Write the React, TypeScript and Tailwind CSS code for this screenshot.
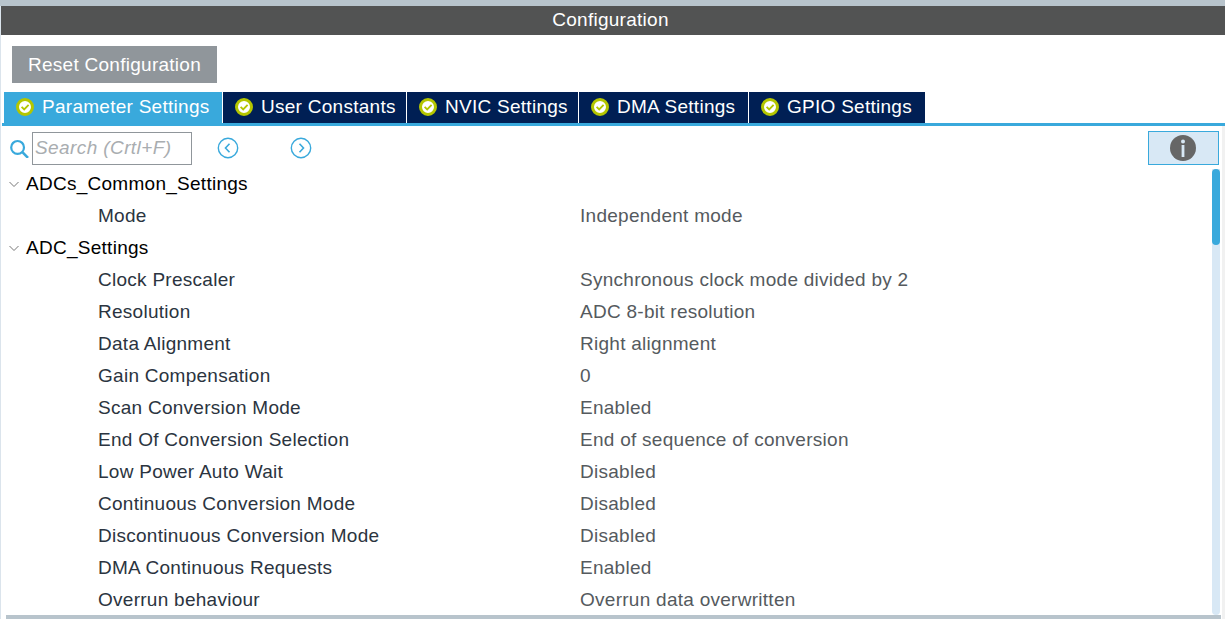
import React from "react";

const Check = () => (
  <svg width="18" height="18" viewBox="0 0 18 18" className="shrink-0">
    <circle cx="9" cy="9" r="7.5" fill="#ffffff" stroke="#b4c600" strokeWidth="3" />
    <path d="M5.6 8.8 L8.2 11.4 L12.6 6.8" fill="none" stroke="#b4c600" strokeWidth="1.8" />
  </svg>
);

const Circle = ({ d }: { d: string }) => (
  <svg width="22" height="22" viewBox="0 0 22 22">
    <circle cx="11" cy="11" r="9.7" fill="none" stroke="#39a9dc" strokeWidth="1.4" />
    <path d={d} fill="none" stroke="#39a9dc" strokeWidth="1.6" />
  </svg>
);

const tabs = [
  { label: "User Constants", w: "w-[183px]" },
  { label: "NVIC Settings", w: "w-[171px]" },
  { label: "DMA Settings", w: "w-[169px]" },
  { label: "GPIO Settings", w: "w-[176px]" },
];

type Row = { k: string; v?: string; head?: boolean };
const rows: Row[] = [
  { k: "ADCs_Common_Settings", head: true },
  { k: "Mode", v: "Independent mode" },
  { k: "ADC_Settings", head: true },
  { k: "Clock Prescaler", v: "Synchronous clock mode divided by 2" },
  { k: "Resolution", v: "ADC 8-bit resolution" },
  { k: "Data Alignment", v: "Right alignment" },
  { k: "Gain Compensation", v: "0" },
  { k: "Scan Conversion Mode", v: "Enabled" },
  { k: "End Of Conversion Selection", v: "End of sequence of conversion" },
  { k: "Low Power Auto Wait", v: "Disabled" },
  { k: "Continuous Conversion Mode", v: "Disabled" },
  { k: "Discontinuous Conversion Mode", v: "Disabled" },
  { k: "DMA Continuous Requests", v: "Enabled" },
  { k: "Overrun behaviour", v: "Overrun data overwritten" },
];

export default function App() {
  return (
    <div className="w-[1225px] h-[619px] overflow-hidden flex flex-col bg-white font-['Liberation_Sans',Arial,sans-serif] text-[19px] leading-[22px] tracking-[0.27px]">
      <div className="h-[6px] shrink-0 bg-[#b8c4cc]" />
      <div className="flex-1 min-h-0 flex">
        <div className="w-[1px] shrink-0 bg-[#dbe4ec]" />
        <div className="flex-1 min-w-0 flex flex-col">
          <div className="h-[29px] shrink-0 bg-[#525353] text-white flex items-center justify-center pb-[1px] pr-[5px]">
            Configuration
          </div>
          <div className="pl-[11px] pt-[11px] shrink-0">
            <div className="w-[205px] h-[37px] bg-[#90969b] text-white flex items-center justify-center">
              Reset Configuration
            </div>
          </div>
          <div className="shrink-0 mt-[9px] pl-[1px]">
            <div className="flex h-[34px] border-b-[3px] border-[#39a9dc]">
              <div className="ml-[2px] w-[218px] h-[31px] bg-[#39a9dc] text-white flex items-center gap-[8px] pl-[12px] pb-[1px]">
                <Check />
                <span>Parameter Settings</span>
              </div>
              {tabs.map((t) => (
                <div
                  key={t.label}
                  className={`${t.w} h-[31px] ml-[1px] bg-[#001f54] text-white flex items-center gap-[8px] pl-[12px] pb-[1px]`}
                >
                  <Check />
                  <span>{t.label}</span>
                </div>
              ))}
            </div>
          </div>
          <div className="flex-1 min-h-0 flex">
            <div className="flex-1 min-w-0 flex flex-col">
              <div className="h-[43px] shrink-0 flex items-center pl-[9px] pr-[2px] pt-[1px]">
                <svg width="20" height="20" viewBox="0 0 20 20" className="shrink-0">
                  <circle cx="7.6" cy="9.4" r="6.4" fill="none" stroke="#39a9dc" strokeWidth="2.2" />
                  <path d="M12.4 14.2 L18 19.8" stroke="#39a9dc" strokeWidth="2.6" />
                </svg>
                <div className="ml-[2px] w-[160px] h-[33px] border border-[#90969b] flex items-center pl-[2px] italic text-[#a9adb0] tracking-[0.4px]">
                  Search (Crtl+F)
                </div>
                <div className="ml-[25px]">
                  <Circle d="M12.5 6.8 L8.5 11 L12.5 15.2" />
                </div>
                <div className="ml-[51px]">
                  <Circle d="M9.5 6.8 L13.5 11 L9.5 15.2" />
                </div>
                <div className="ml-auto w-[71px] h-[34px] border border-[#39a9dc] bg-[#d8e8f5] flex items-center justify-center mr-[1px] pr-[2px]">
                  <svg width="26" height="26" viewBox="0 0 26 26">
                    <circle cx="13" cy="13" r="13" fill="#666666" />
                    <circle cx="13" cy="6.5" r="2" fill="#d8e8f5" />
                    <rect x="11.6" y="10" width="2.8" height="12" fill="#d8e8f5" />
                  </svg>
                </div>
              </div>
              <div className="flex-1 min-h-0 flex">
                <div className="flex-1 min-w-0">
                  {rows.map((r) =>
                    r.head ? (
                      <div key={r.k} className="h-[32px] flex items-center pl-[7px] text-black pb-[2px]">
                        <svg width="12" height="12" viewBox="0 0 12 12" className="shrink-0">
                          <path d="M1.5 4 L6 8.5 L10.5 4" fill="none" stroke="#777777" strokeWidth="1" />
                        </svg>
                        <span className="ml-[6px]">{r.k}</span>
                      </div>
                    ) : (
                      <div key={r.k} className="h-[32px] flex items-center pl-[97px] pb-[2px]">
                        <span className="w-[482px] shrink-0 text-[#2b3440]">{r.k}</span>
                        <span className="text-[#555a5e]">{r.v}</span>
                      </div>
                    )
                  )}
                </div>
                <div className="w-[8px] shrink-0 mr-[2px] mb-[4px] bg-[#d8e8f5] rounded-b-[4px]">
                  <div className="w-[8px] h-[76px] bg-[#39a9dc] rounded-[4px]" />
                </div>
              </div>
            </div>
            <div className="w-[3px] shrink-0 bg-[#f1f1f1]" />
          </div>
          <div className="h-[4px] shrink-0 ml-[5px] mr-[4px] bg-[#b8c4cc] -mt-[4px] relative" />
        </div>
      </div>
    </div>
  );
}
